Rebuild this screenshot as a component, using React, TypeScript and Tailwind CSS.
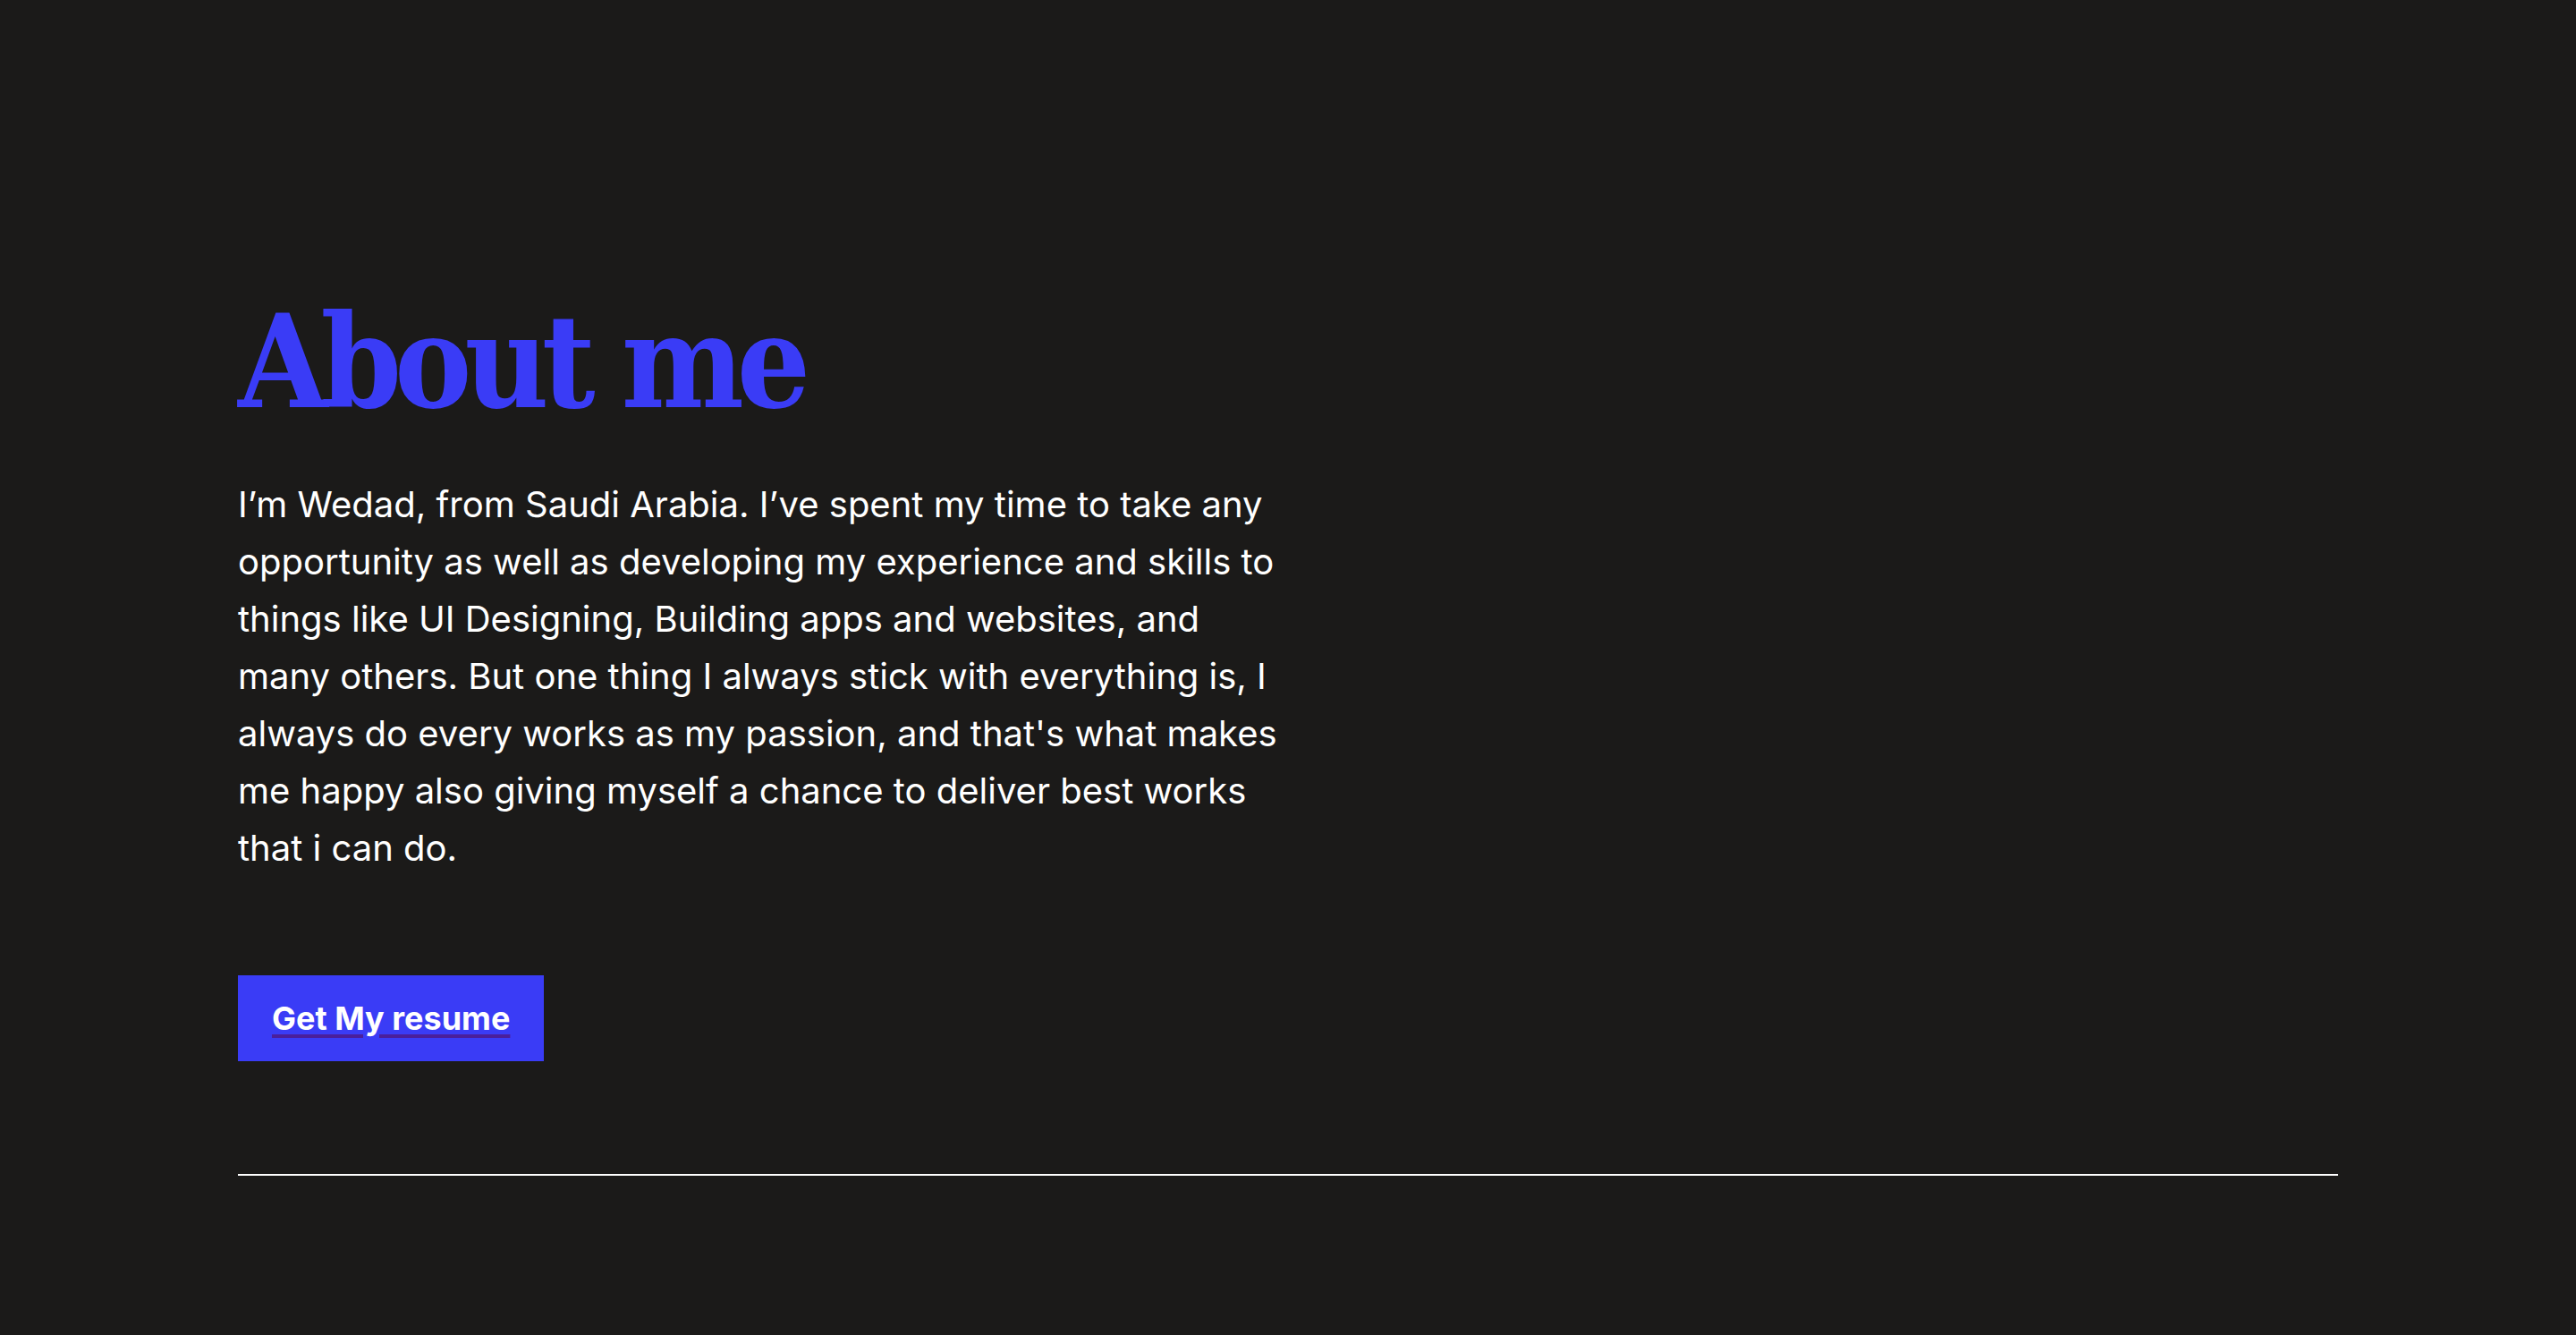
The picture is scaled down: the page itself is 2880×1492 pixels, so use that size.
export default function App() {
  return (
    <main className="min-h-screen w-full bg-[#1b1a19]" style={{ fontFamily: "Inter, 'Noto Sans', sans-serif" }}>
      <section className="px-[266px] pt-[330px]">
        <h1
          className="text-[144px] leading-[150px] font-bold font-stretch-condensed text-[#3a3cf6] tracking-[-8px]"
          style={{ fontFamily: "'DejaVu Serif Condensed', 'DejaVu Serif', 'Liberation Serif', serif" }}
        >
          About me
        </h1>
        <p className="mt-[52px] w-[1180px] text-[40px] leading-[64px] text-white">
          I’m Wedad, from Saudi Arabia. I’ve spent my time to take any opportunity as well as developing my experience and skills to things like UI Designing, Building apps and websites, and many others. But one thing I always stick with everything is, I always do every works as my passion, and that's what makes me happy also giving myself a chance to deliver best works that i can do.
        </p>
        <a
          href="#"
          className="mt-[110px] inline-flex h-[96px] items-center bg-[#3a3cf6] px-[38px] text-[36px] font-bold text-white underline decoration-[#4a1f9c] decoration-[4px] underline-offset-[5px]"
        >
          Get My resume
        </a>
        <hr className="mt-[126px] border-t-2 border-white" />
      </section>
    </main>
  );
}
